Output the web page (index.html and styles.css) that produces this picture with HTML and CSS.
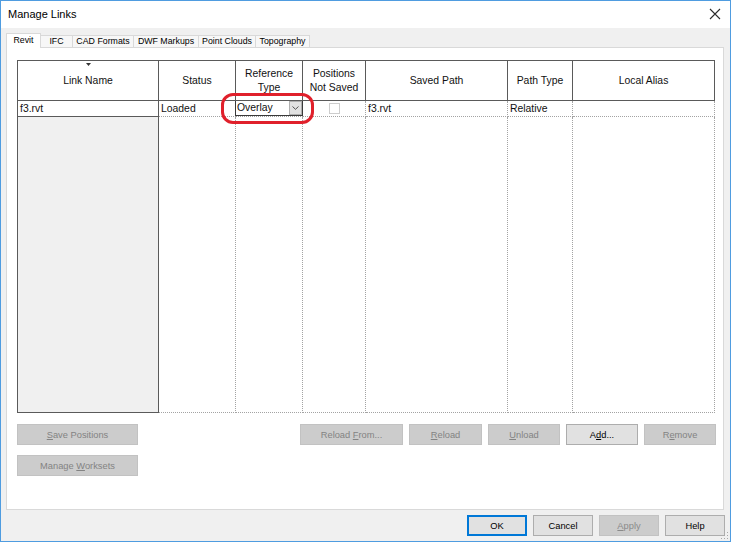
FILE: index.html
```html
<!DOCTYPE html>
<html>
<head>
<meta charset="utf-8">
<title>Manage Links</title>
<link rel="stylesheet" href="styles.css">
</head>
<body>
<div class="window">
  <div class="titlebar">
    <span class="title">Manage Links</span>
    <svg class="close" width="12" height="12" viewBox="0 0 12 12"><path d="M1 1 L11 11 M11 1 L1 11" stroke="#2b2b2b" stroke-width="1.1" fill="none"/></svg>
  </div>
  <div class="client">
    <div class="tabs">
      <div class="tab tab-active tab-revit">Revit</div>
      <div class="tab tab-ifc">IFC</div>
      <div class="tab tab-cad">CAD Formats</div>
      <div class="tab tab-dwf">DWF Markups</div>
      <div class="tab tab-pc">Point Clouds</div>
      <div class="tab tab-topo">Topography</div>
    </div>
    <div class="panel">
      <div class="grid">
        <div class="hcell hcell-name">
          <svg class="sort" width="5" height="3" viewBox="0 0 5 3"><path d="M0 0 H5 L2.5 3 Z" fill="#333"/></svg>
          Link Name
        </div>
        <div class="hcell">Status</div>
        <div class="hcell">Reference<br>Type</div>
        <div class="hcell">Positions<br>Not Saved</div>
        <div class="hcell">Saved Path</div>
        <div class="hcell">Path Type</div>
        <div class="hcell">Local Alias</div>

        <div class="cell cell-name">f3.rvt</div>
        <div class="cell">Loaded</div>
        <div class="cell cell-combo">
          <div class="combo">
            <span class="combo-text">Overlay</span>
            <span class="combo-btn"><svg width="7" height="4" viewBox="0 0 7 4"><path d="M0.5 0.5 L3.5 3.3 L6.5 0.5" stroke="#444" stroke-width="0.9" fill="none"/></svg></span>
          </div>
        </div>
        <div class="cell cell-check"><span class="checkbox"></span></div>
        <div class="cell">f3.rvt</div>
        <div class="cell">Relative</div>
        <div class="cell"></div>

        <div class="fill fill-name"></div>
        <div class="fill"></div>
        <div class="fill"></div>
        <div class="fill"></div>
        <div class="fill"></div>
        <div class="fill"></div>
        <div class="fill"></div>

        <div class="annotation"></div>
      </div>
      <div class="actions">
        <button class="btn btn-disabled btn-side"><u>S</u>ave Positions</button>
        <div class="actions-right">
          <button class="btn btn-disabled btn-reloadfrom">Reload <u>F</u>rom...</button>
          <button class="btn btn-disabled btn-reload"><u>R</u>eload</button>
          <button class="btn btn-disabled btn-std"><u>U</u>nload</button>
          <button class="btn btn-std">A<u>d</u>d...</button>
          <button class="btn btn-disabled btn-std">R<u>e</u>move</button>
        </div>
      </div>
      <div class="actions actions-second">
        <button class="btn btn-disabled btn-side">Manage <u>W</u>orksets</button>
      </div>
    </div>
    <div class="footer">
      <button class="btn btn-foot btn-default">OK</button>
      <button class="btn btn-foot">Cancel</button>
      <button class="btn btn-foot btn-disabled"><u>A</u>pply</button>
      <button class="btn btn-foot">Help</button>
    </div>
  </div>
  <svg class="grip" width="9" height="9" viewBox="0 0 9 9">
    <rect x="7" y="1" width="1" height="1" fill="#a8a8a8"/>
    <rect x="4" y="4" width="1" height="1" fill="#a8a8a8"/>
    <rect x="7" y="4" width="1" height="1" fill="#a8a8a8"/>
    <rect x="1" y="7" width="1" height="1" fill="#a8a8a8"/>
    <rect x="4" y="7" width="1" height="1" fill="#a8a8a8"/>
    <rect x="7" y="7" width="1" height="1" fill="#a8a8a8"/>
  </svg>
</div>
</body>
</html>
```
FILE: styles.css
```css
* { box-sizing: border-box; }
html, body { margin: 0; padding: 0; }
body {
  width: 731px;
  height: 542px;
  overflow: hidden;
  font-family: "Liberation Sans", Arial, sans-serif;
  color: #111;
  background: #f0f0f0;
}
.window {
  position: relative;
  width: 731px;
  height: 542px;
  border: 1px solid #4f9ce0;
  background: #f0f0f0;
  display: flex;
  flex-direction: column;
}
.titlebar {
  height: 27px;
  background: #ffffff;
  display: flex;
  align-items: center;
  justify-content: space-between;
  padding: 0 9px 1px 7px;
}
.title {
  font-size: 11px;
  color: #000;
}
.close { display: block; }
.client {
  flex: 1;
  display: flex;
  flex-direction: column;
  padding: 5px 6px 0 5px;
}
.tabs {
  height: 14px;
  display: flex;
  align-items: flex-end;
}
.tab {
  height: 12px;
  background: #f7f7f7;
  border: 1px solid #d9d9d9;
  border-bottom: none;
  border-left: none;
  font-size: 8.8px;
  line-height: 11px;
  text-align: center;
  color: #000;
  white-space: nowrap;
}
.tab-active {
  height: 15px;
  margin-bottom: -1px;
  background: #ffffff;
  border-left: 1px solid #d9d9d9;
  position: relative;
  z-index: 1;
  line-height: 13px;
}
.tab-revit { width: 35px; }
.tab-ifc { width: 32px; }
.tab-cad { width: 61px; }
.tab-dwf { width: 65px; }
.tab-pc { width: 57px; }
.tab-topo { width: 54px; }

.panel {
  height: 463px;
  background: #ffffff;
  border: 1px solid #d9d9d9;
  padding: 12px 7px 0 10px;
}
.grid {
  position: relative;
  width: 698px;
  display: grid;
  grid-template-columns: 141px 77px 67px 63px 142px 65px 142px;
  grid-template-rows: 40px 16px 296px;
  border-top: 1px solid #5a5a5a;
  border-left: 1px solid #5a5a5a;
  font-size: 10.4px;
}
.hcell {
  position: relative;
  border-right: 1px solid #5a5a5a;
  border-bottom: 1px solid #5a5a5a;
  display: flex;
  align-items: center;
  justify-content: center;
  text-align: center;
  line-height: 14px;
  padding-top: 1px;
  color: #111;
}
.sort {
  position: absolute;
  top: 2px;
  left: 68px;
}
.cell {
  border-right: 1px dotted #a3a3a3;
  border-bottom: 1px dotted #a3a3a3;
  padding: 0 2px;
  line-height: 15px;
  white-space: nowrap;
  color: #111;
}
.cell-name {
  border-right: 1px solid #5a5a5a;
  border-bottom: 1px solid #5a5a5a;
}
.cell-combo { padding: 0; }
.combo {
  height: 16px;
  margin-top: -1px;
  margin-left: -1px;
  width: 68px;
  border: 1px solid #3a3a3a;
  background: #fff;
  display: flex;
  align-items: center;
  justify-content: space-between;
  padding-left: 1px;
}
.combo-text { line-height: 14px; }
.combo-btn {
  width: 13px;
  height: 14px;
  background: #e1e1e1;
  border: 1px solid #b0b0b0;
  display: flex;
  align-items: center;
  justify-content: center;
}
.combo-btn svg { display: block; }
.cell-check {
  display: flex;
  align-items: center;
  justify-content: center;
}
.checkbox {
  width: 11px;
  height: 11px;
  border: 1px solid #cdcdcd;
  background: #fff;
}
.fill {
  border-right: 1px dotted #a3a3a3;
  border-bottom: 1px dotted #a3a3a3;
}
.fill-name {
  background: #f0f0f0;
  border-right: 1px solid #5a5a5a;
  border-bottom: 1px solid #5a5a5a;
}
.annotation {
  position: absolute;
  left: 203px;
  top: 32px;
  width: 93px;
  height: 31px;
  border: 3px solid #e0202b;
  border-radius: 12px;
  pointer-events: none;
}

.actions {
  margin-top: 11px;
  display: flex;
  justify-content: space-between;
}
.actions-second { margin-top: 10px; }
.actions-right {
  display: flex;
  gap: 6px;
}
.btn {
  height: 21px;
  margin: 0;
  padding: 0;
  font-family: "Liberation Sans", Arial, sans-serif;
  font-size: 9.3px;
  color: #000;
  background: #e1e1e1;
  border: 1px solid #adadad;
  border-radius: 0;
  text-align: center;
}
.btn u { text-underline-offset: 1px; }
.btn-disabled {
  background: #cccccc;
  border-color: #c2c2c2;
  color: #838383;
}
.btn-side { width: 121px; }
.btn-reloadfrom { width: 103px; }
.btn-reload { width: 73px; }
.btn-std { width: 72px; }

.footer {
  display: flex;
  justify-content: flex-end;
  gap: 6px;
  margin-top: 5px;
  margin-right: -1px;
}
.btn-foot {
  width: 60px;
  height: 21px;
}
.btn-foot.btn-disabled { color: #8a8a8a; }
.btn-default {
  border: 1px solid #0078d7;
  box-shadow: inset 0 0 0 1px #0078d7;
}
.grip {
  position: absolute;
  right: 1px;
  bottom: 1px;
}
```
